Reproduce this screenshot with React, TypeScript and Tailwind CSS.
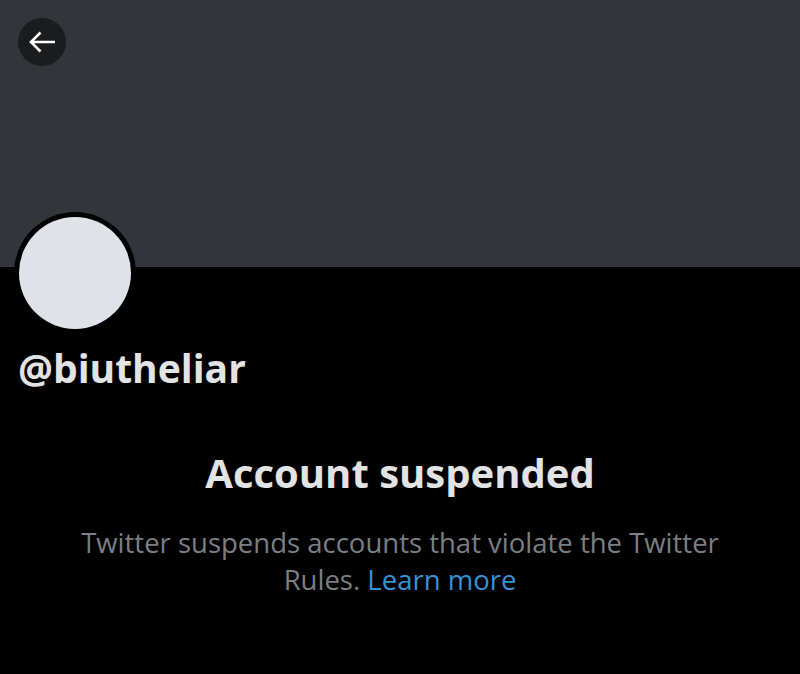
import React from 'react'

export default function App() {
  return (
    <div className="w-[800px] h-[674px] bg-black overflow-hidden" style={{ fontFamily: '"Open Sans", sans-serif' }}>
      {/* banner */}
      <div className="h-[267px] bg-[#32363a] px-[18px] pt-[18px]">
        <button className="w-12 h-12 rounded-full bg-[#1b1c1e] flex items-center justify-center">
          <svg width="48" height="48" viewBox="0 0 48 48" fill="none" stroke="white" strokeWidth="2.6" strokeLinecap="butt">
            <path d="M37 24H14M22.5 14.5 13 24l9.5 9.5" />
          </svg>
        </button>
      </div>

      {/* avatar + handle */}
      <div className="px-[14px]">
        <div className="-mt-[55px] w-[122px] h-[122px] rounded-full bg-black p-[5px]">
          <div className="w-full h-full rounded-full bg-[#dfe3e8]" />
        </div>
        <div className="pl-[4px] mt-[10px] text-[39px] leading-[48px] font-bold text-[#e1e3e4]">@biutheliar</div>
      </div>

      {/* suspended notice */}
      <div className="mt-[56px] flex flex-col items-center text-center px-10">
        <h1 className="text-[40px] leading-[50px] font-bold text-[#e1e3e4]">Account suspended</h1>
        <p className="mt-[26px] max-w-[680px] text-[27.5px] leading-[37px] text-[#7a7f84]">
          Twitter suspends accounts that violate the Twitter Rules.{' '}
          <span className="text-[#3591d8]">Learn more</span>
        </p>
      </div>
    </div>
  )
}
